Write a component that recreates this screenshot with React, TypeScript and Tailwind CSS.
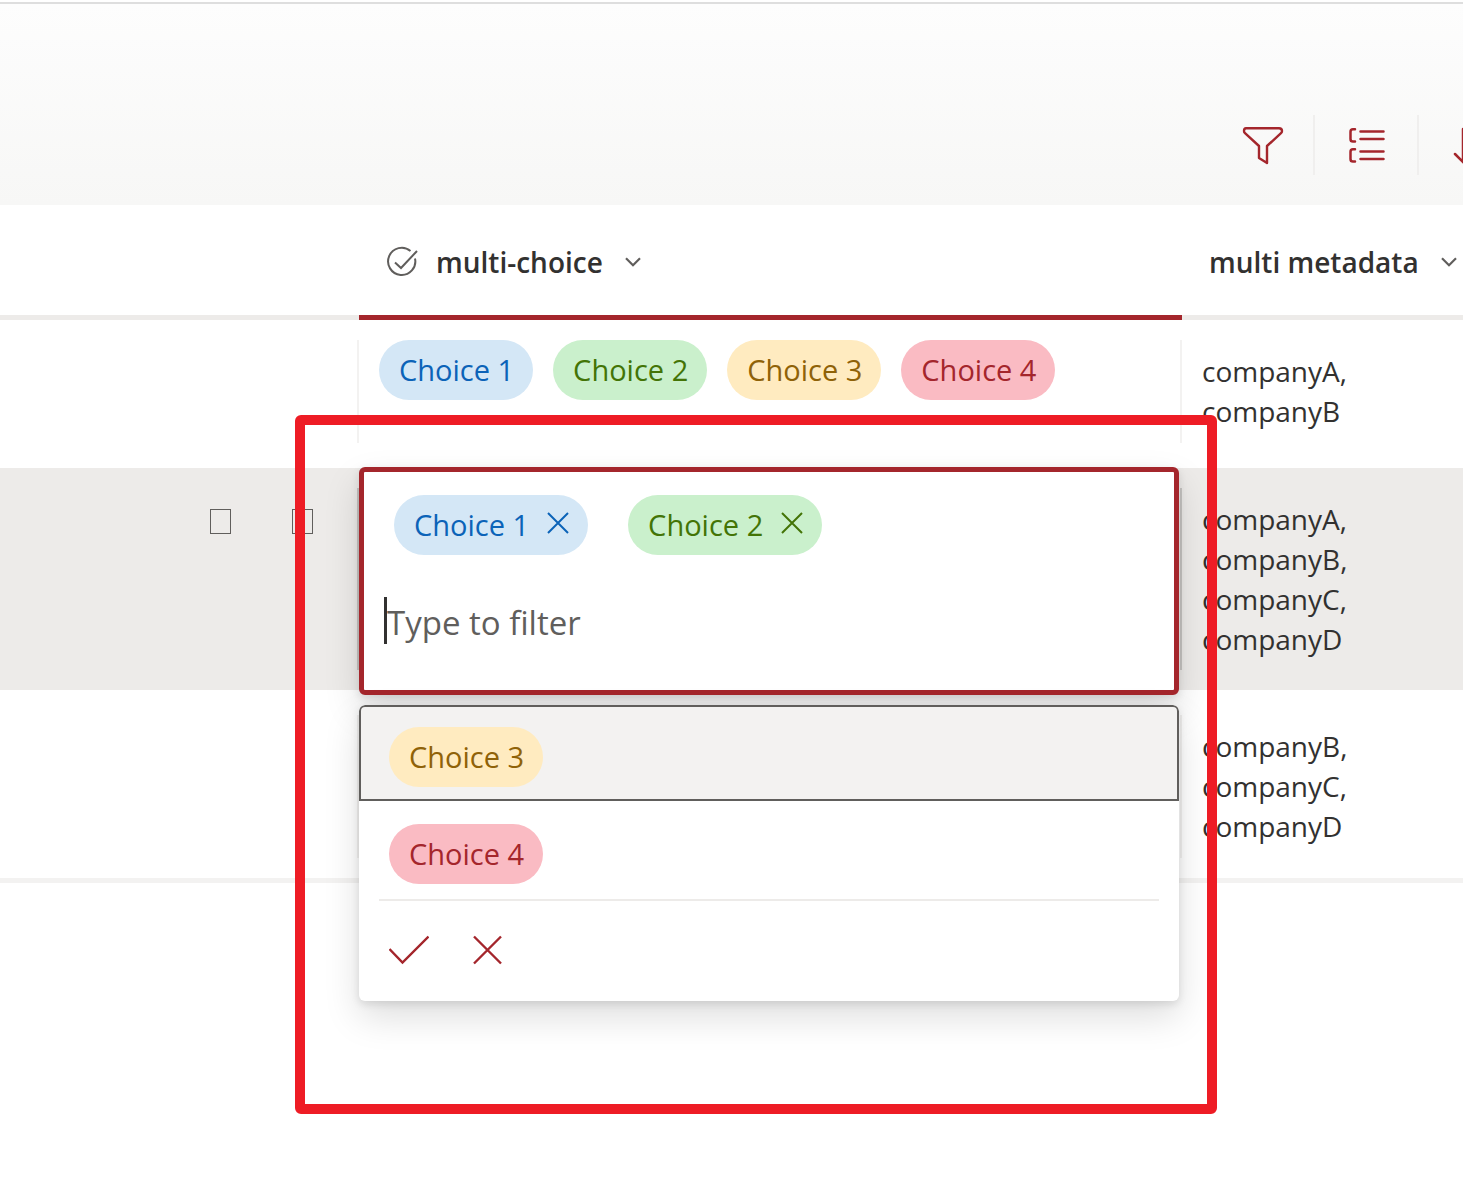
import { useState, type ReactNode } from "react";

const tones = {
  blue: "bg-[#d4e7f6] text-[#0b63b8]",
  green: "bg-[#caf0cc] text-[#437406]",
  yellow: "bg-[#ffebc0] text-[#8f6208]",
  red: "bg-[#fabbc3] text-[#a4262c]",
};

type Tone = keyof typeof tones;

function Pill({ tone, label, onRemove }: { tone: Tone; label: string; onRemove?: () => void }) {
  return (
    <span className={`inline-flex h-[60px] items-center rounded-full pr-[19px] pb-px pl-5 text-[29px] leading-10 whitespace-nowrap ${tones[tone]}`}>
      {label}
      {onRemove && (
        <button type="button" aria-label={`Remove ${label}`} onClick={onRemove} className="ml-[18px] block">
          <svg width="22" height="22" viewBox="0 0 22 22" fill="none" stroke="currentColor" strokeWidth="2" className="mb-1">
            <path d="M1 1 21 21M21 1 1 21" />
          </svg>
        </button>
      )}
    </span>
  );
}

function Chevron() {
  return (
    <svg width="16" height="10" viewBox="0 0 16 10" fill="none" stroke="#605e5c" strokeWidth="2.2" aria-hidden="true">
      <path d="M1 1.2 8 8.2 15 1.2" />
    </svg>
  );
}

function ToolButton({ label, children }: { label: string; children: ReactNode }) {
  return (
    <button
      type="button"
      aria-label={label}
      className="flex h-[60px] w-[104px] shrink-0 items-center justify-center border-r-2 border-[#f0efee] pt-[2px] pl-[2px] text-[#a4262c]"
    >
      {children}
    </button>
  );
}

function Toolbar() {
  return (
    <header className="mt-[2px] overflow-hidden border-t-2 border-[#dedede] bg-linear-to-b from-[#fdfdfd] to-[#f7f7f6] pt-[111px] pb-[30px]">
      <div className="-mr-[60px] flex justify-end">
        <ToolButton label="Filter">
          <svg width="42" height="40" viewBox="0 0 42 40" fill="none" stroke="currentColor" strokeWidth="2.4" strokeLinejoin="round">
            <path d="M4 2.2H37Q40 2.2 40 5Q40 6.300 39 7.200L25 20V37L17 32V20L3 7.200Q2 6.300 2 5Q2 2.200 4 2.200Z" />
          </svg>
        </ToolButton>
        <ToolButton label="Group">
          <svg width="38" height="38" viewBox="0 0 38 38" fill="none" stroke="currentColor" strokeWidth="2.500" strokeLinecap="round">
            <path d="M7 2.200H5Q2.500 2.200 2.500 4.700V12Q2.500 14.600 5 14.600H7M7 22.200H5Q2.500 22.200 2.500 24.700V32Q2.500 34.600 5 34.600H7M12.500 4.500H35.500M12.500 12H35.500M12.500 24.500H35.500M12.500 32H35.500" />
          </svg>
        </ToolButton>
        <ToolButton label="Sort">
          <svg width="38" height="38" viewBox="0 0 38 38" fill="none" stroke="currentColor" strokeWidth="2.500" strokeLinecap="round">
            <path d="M11 2V34M3 27 11 35 19 27M27 36V3M19 11 27 3 35 11" />
          </svg>
        </ToolButton>
      </div>
    </header>
  );
}

function Names({ names }: { names: string[] }) {
  return (
    <ul className="pl-5">
      {names.map((name, i) => (
        <li key={name}>{i < names.length - 1 ? `${name},` : name}</li>
      ))}
    </ul>
  );
}

function ChoiceEditor() {
  const [selected, setSelected] = useState<{ tone: Tone; label: string }[]>([
    { tone: "blue", label: "Choice 1" },
    { tone: "green", label: "Choice 2" },
  ]);
  const shadow = "shadow-[0_16px_36px_rgba(0,0,0,0.132),0_3px_9px_rgba(0,0,0,0.108)]";
  return (
    <div className="absolute -top-px right-[3px] left-0 z-10">
      <div className={`h-[228px] rounded-md border-5 border-[#a4262c] bg-white pt-[23px] pl-5 ${shadow}`}>
        <div className="flex gap-10 pl-[10px]">
          {selected.map((c) => (
            <Pill key={c.label} {...c} onRemove={() => setSelected(selected.filter((s) => s !== c))} />
          ))}
        </div>
        <div className="mt-[42px] flex items-center">
          <span className="h-[47px] w-[3px] bg-[#323130]" />
          <input
            aria-label="Type to filter"
            placeholder="Type to filter"
            className="h-[47px] min-w-0 flex-1 pt-1 text-[33px] text-[#323130] outline-none placeholder:text-[#605e5c]"
          />
        </div>
      </div>
      <div className={`mt-[10px] overflow-hidden rounded-md bg-white ${shadow}`}>
        <button type="button" className="flex h-24 w-full rounded-t-md border-2 border-[#605e5c] bg-[#f3f2f1] pt-5 pl-7">
          <Pill tone="yellow" label="Choice 3" />
        </button>
        <button type="button" className="flex h-[98px] w-full pt-[23px] pl-[30px]">
          <Pill tone="red" label="Choice 4" />
        </button>
        <div className="mx-5 flex h-[102px] gap-11 border-t-2 border-[#edebe9] pt-[34px] pl-[10px] text-[#a4262c]">
          <button type="button" aria-label="Save" className="self-start">
            <svg width="40" height="30" viewBox="0 0 40 30" fill="none" stroke="currentColor" strokeWidth="2.400">
              <path d="M.5 14 13.500 27.500 39.500 1.500" />
            </svg>
          </button>
          <button type="button" aria-label="Cancel" className="self-start">
            <svg width="30" height="30" viewBox="0 0 30 30" fill="none" stroke="currentColor" strokeWidth="2.400">
              <path d="M1 1.500 28 28.500M28 1.500 1 28.500" />
            </svg>
          </button>
        </div>
      </div>
    </div>
  );
}

export default function App() {
  return (
    <div className="min-h-screen overflow-hidden bg-white font-['Open_Sans',sans-serif] text-[28px] leading-10 text-[#323130]">
      <Toolbar />
      <table className="w-full table-fixed border-separate border-spacing-0 text-left">
        <colgroup>
          <col className="w-[359px]" />
          <col />
          <col className="w-[281px]" />
        </colgroup>
        <thead>
          <tr className="h-[115px]">
            <td className="border-b-5 border-[#edebe9]" />
            <th scope="col" className="border-b-5 border-[#a4262c] p-0 pt-1 pl-7 font-semibold">
              <button type="button" className="flex items-center">
                <svg width="32" height="32" viewBox="0 0 32 32" fill="none" stroke="#605e5c" strokeWidth="2" aria-hidden="true">
                  <path d="M23.500 5A13.600 13.600 0 1 0 28 12.500M8 16.500 14 22 30 5" />
                </svg>
                <span className="mr-[22px] ml-[17px]">multi-choice</span>
                <Chevron />
              </button>
            </th>
            <th scope="col" className="border-b-5 border-[#edebe9] p-0 pt-1 pl-[27px] font-semibold">
              <button type="button" className="flex items-center whitespace-nowrap">
                <span className="mr-[22px]">multi metadata</span>
                <Chevron />
              </button>
            </th>
          </tr>
        </thead>
        <tbody>
          <tr className="h-[148px]">
            <td className="p-0">
              <div className="mt-5 mb-[25px] h-[103px] border-r-2 border-[#f3f2f1]" />
            </td>
            <td className="p-0">
              <div className="mt-5 mb-[25px] flex h-[103px] items-start gap-5 border-r-2 border-[#f3f2f1] pl-5">
                <Pill tone="blue" label="Choice 1" />
                <Pill tone="green" label="Choice 2" />
                <Pill tone="yellow" label="Choice 3" />
                <Pill tone="red" label="Choice 4" />
              </div>
            </td>
            <td className="p-0 pb-[6px]">
              <Names names={["companyA", "companyB"]} />
            </td>
          </tr>
          <tr className="h-[222px] bg-[#edebe9]">
            <td className="p-0">
              <div className="flex h-[182px] items-start justify-end gap-[61px] border-r-2 border-[#c8c6c4] pt-[21px] pr-11">
                <button type="button" aria-label="Share" className="h-[25px] w-[21px] border border-[#605e5c]" />
                <button type="button" aria-label="More actions" className="h-[25px] w-[21px] border border-[#605e5c]" />
              </div>
            </td>
            <td className="relative p-0">
              <div className="h-[182px] border-r-2 border-[#c8c6c4]" />
              <ChoiceEditor />
              <div className="pointer-events-none absolute -top-[53px] -right-[35px] -left-16 z-20 h-[699px] rounded-md border-10 border-[#ee1c25]" />
            </td>
            <td className="p-0">
              <Names names={["companyA", "companyB", "companyC", "companyD"]} />
            </td>
          </tr>
          <tr className="h-[193px]">
            <td className="border-b-5 border-[#f3f2f1] p-0">
              <div className="mt-[25px] mb-5 h-[143px] border-r-2 border-[#f3f2f1]" />
            </td>
            <td className="border-b-5 border-[#f3f2f1] p-0">
              <div className="mt-[25px] mb-5 h-[143px] border-r-2 border-[#f3f2f1]" />
            </td>
            <td className="border-b-5 border-[#f3f2f1] p-0 pt-1">
              <Names names={["companyB", "companyC", "companyD"]} />
            </td>
          </tr>
        </tbody>
      </table>
    </div>
  );
}
